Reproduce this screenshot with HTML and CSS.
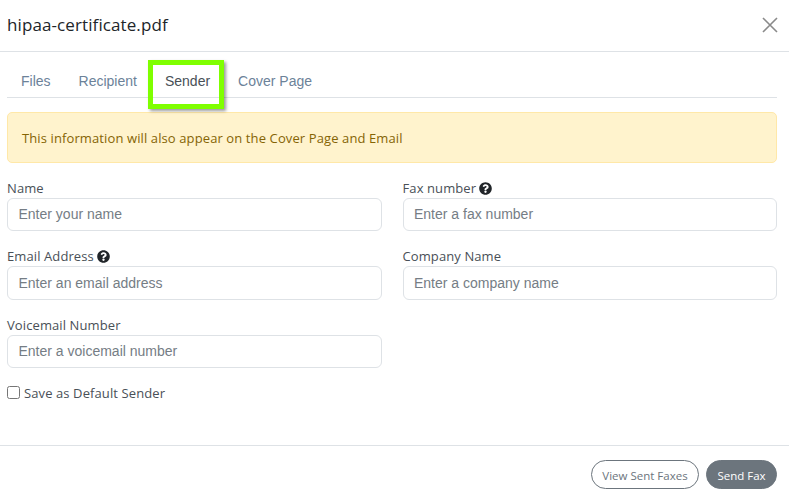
FILE: index.html
```html
<!DOCTYPE html>
<html lang="en">
<head>
<meta charset="utf-8">
<title>hipaa-certificate.pdf</title>
<link rel="stylesheet" href="styles.css">
</head>
<body>
<div class="modal">
  <header class="modal-header">
    <h1 class="modal-title">hipaa-certificate.pdf</h1>
    <svg class="close" viewBox="0 0 16 16" aria-label="Close"><path d="M1 1 L15 15 M15 1 L1 15"/></svg>
  </header>
  <main class="modal-body">
    <nav class="tabs">
      <a class="tab">Files</a>
      <a class="tab">Recipient</a>
      <a class="tab tab-active">Sender</a>
      <a class="tab">Cover Page</a>
    </nav>
    <div class="alert">This information will also appear on the Cover Page and Email</div>
    <form class="form-grid">
      <div class="field">
        <label class="label">Name</label>
        <input class="input" placeholder="Enter your name">
      </div>
      <div class="field">
        <label class="label">Fax number <svg class="help" viewBox="0 0 512 512"><path d="M504 256c0 137-111 248-248 248S8 393 8 256 119 8 256 8s248 111 248 248zM262.700 90c-54.500 0-89.300 23-116.600 63.800-3.500 5.300-2.400 12.400 2.700 16.300l34.700 26.300c5.200 3.900 12.600 3 16.700-2.100 17.900-22.700 30.100-35.800 57.300-35.800 20.400 0 45.700 13.100 45.700 32.900 0 15-12.400 22.700-32.500 34-23.500 13.200-54.600 29.600-54.600 70.600V300c0 6.600 5.400 12 12 12h56c6.600 0 12-5.400 12-12v-1.300c0-28.500 83.200-29.600 83.200-106.700 0-58-60.200-102-116.600-102zM256 338c-25.400 0-46 20.600-46 46s20.600 46 46 46 46-20.600 46-46-20.600-46-46-46z"/></svg></label>
        <input class="input" placeholder="Enter a fax number">
      </div>
      <div class="field">
        <label class="label">Email Address <svg class="help" viewBox="0 0 512 512"><path d="M504 256c0 137-111 248-248 248S8 393 8 256 119 8 256 8s248 111 248 248zM262.700 90c-54.500 0-89.300 23-116.600 63.800-3.500 5.300-2.400 12.400 2.700 16.300l34.700 26.300c5.200 3.900 12.600 3 16.700-2.100 17.900-22.700 30.100-35.800 57.300-35.800 20.400 0 45.700 13.100 45.700 32.900 0 15-12.400 22.700-32.500 34-23.500 13.200-54.600 29.600-54.600 70.600V300c0 6.600 5.400 12 12 12h56c6.600 0 12-5.400 12-12v-1.300c0-28.500 83.200-29.600 83.200-106.700 0-58-60.200-102-116.600-102zM256 338c-25.400 0-46 20.600-46 46s20.600 46 46 46 46-20.600 46-46-20.600-46-46-46z"/></svg></label>
        <input class="input" placeholder="Enter an email address">
      </div>
      <div class="field">
        <label class="label">Company Name</label>
        <input class="input" placeholder="Enter a company name">
      </div>
      <div class="field">
        <label class="label">Voicemail Number</label>
        <input class="input" placeholder="Enter a voicemail number">
      </div>
    </form>
    <label class="check"><input type="checkbox" class="checkbox"> Save as Default Sender</label>
  </main>
  <footer class="modal-footer">
    <button class="btn btn-outline" type="button">View Sent Faxes</button>
    <button class="btn btn-solid" type="button">Send Fax</button>
  </footer>
</div>
</body>
</html>
```

FILE: styles.css
```css
* { box-sizing: border-box; }
html, body { margin: 0; padding: 0; background: #fff; }
body { font-family: "Open Sans", sans-serif; color: #212529; overflow: hidden; }
.modal { width: 789px; height: 502px; display: flex; flex-direction: column; }
.modal-header {
  height: 52px;
  border-bottom: 1px solid #dee2e6;
  display: flex;
  align-items: center;
  justify-content: space-between;
  padding: 0 11px 2px 7px;
}
.modal-title { margin: 0; font-size: 17px; font-weight: 400; line-height: 24px; letter-spacing: 0.1px; color: #212529; }
.close { width: 16px; height: 16px; fill: none; stroke: #8a8a8a; stroke-width: 1.6; }
.modal-body { height: 393px; padding: 0 12px 0 7px; }
.tabs { display: flex; height: 46px; border-bottom: 1px solid #dee2e6; }
.tab {
  position: relative;
  font-family: "Liberation Sans", sans-serif;
  font-size: 14px;
  line-height: 20px;
  padding: 19px 14px 0;
  color: #6c8299;
}
.tab-active { color: #495057; }
.tab-active::after {
  content: "";
  position: absolute;
  left: -3px;
  right: 0;
  top: 8px;
  height: 39px;
  border: 5px solid #7fff00;
  box-shadow: 2px 2px 3px rgba(0, 0, 0, 0.4);
}
.alert {
  margin-top: 14px;
  height: 51px;
  background: #fff3cd;
  border: 1px solid #ffe8a8;
  border-radius: 5px;
  padding: 0 14px;
  font-size: 13px;
  line-height: 50px;
  letter-spacing: 0.11px;
  color: #856404;
}
.form-grid {
  display: grid;
  grid-template-columns: 374.5px 374.5px;
  column-gap: 21px;
  row-gap: 16px;
  margin-top: 15.9px;
}
.field { display: flex; flex-direction: column; }
.label { font-size: 13px; line-height: 19px; letter-spacing: 0.1px; color: #495057; display: flex; align-items: center; gap: 3px; height: 19px; }
.help { width: 13px; height: 13px; fill: #212529; }
.input {
  height: 33.5px;
  border: 1px solid #dee2e6;
  border-radius: 6px;
  padding: 0 10.5px 1px;
  font-family: "Liberation Sans", sans-serif;
  font-size: 14px;
  outline: none;
  background: #fff;
}
.input::placeholder { color: #757d85; opacity: 1; }
.check { display: flex; align-items: center; gap: 4px; margin-top: 15.6px; font-size: 13px; line-height: 19px; letter-spacing: 0.1px; color: #495057; }
.checkbox { margin: -2px 0 0 0; width: 13px; height: 13px; }
.modal-footer {
  flex: 1;
  border-top: 1px solid #dee2e6;
  display: flex;
  justify-content: flex-end;
  align-items: flex-start;
  gap: 7px;
  padding: 14px 12px 0 0;
}
.btn {
  height: 29px;
  border-radius: 15px;
  font-family: "Open Sans", sans-serif;
  font-size: 11.5px;
  padding: 2px 0 0;
  border: 1px solid #6c757d;
}
.btn-outline { width: 108px; background: #fff; color: #6c757d; }
.btn-solid { width: 71px; background: #6c757d; color: #fff; }
```
